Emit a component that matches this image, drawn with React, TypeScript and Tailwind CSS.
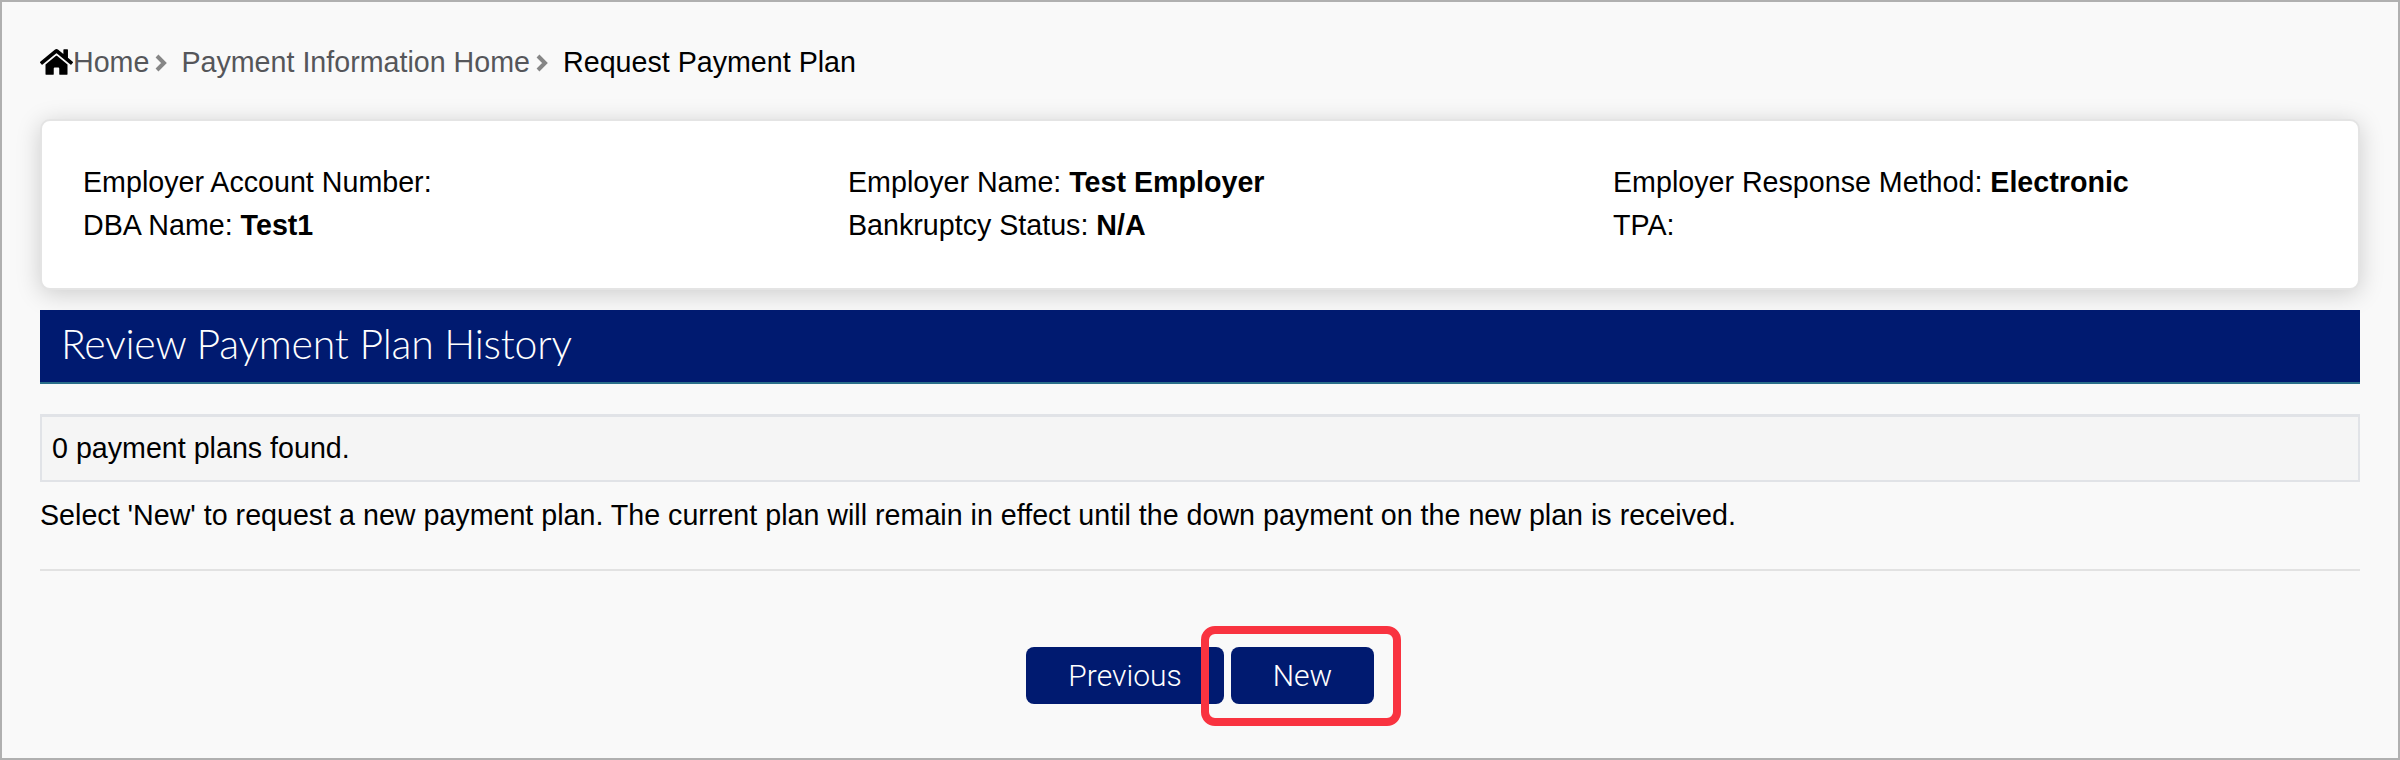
import { FaHome } from "react-icons/fa";

const infoRows = [
  [
    { label: "Employer Account Number:", value: "" },
    { label: "Employer Name:", value: "Test Employer" },
    { label: "Employer Response Method:", value: "Electronic" },
  ],
  [
    { label: "DBA Name:", value: "Test1" },
    { label: "Bankruptcy Status:", value: "N/A" },
    { label: "TPA:", value: "" },
  ],
];

const Chevron = () => (
  <svg viewBox="0 0 12 18" className="w-[12px] h-[18px] ml-[6px] mt-[2px]">
    <path d="M2 2l7 7-7 7" fill="none" stroke="#868686" strokeWidth="4" />
  </svg>
);

const App = () => {
  return (
    <div className="w-[2400px] h-[760px] border-2 border-[#b0b0b0] bg-[#f9f9f9] px-[38px] font-['Liberation_Sans',Arial,sans-serif] text-[28.65px] text-black flex flex-col">
      <nav className="mt-[40px] h-[40px] flex items-center">
        <FaHome className="w-[33px] h-[30px] text-black" />
        <span className="text-[#55565a]">Home</span>
        <Chevron />
        <span className="ml-[14px] text-[#55565a]">Payment Information Home</span>
        <Chevron />
        <span className="ml-[15px]">Request Payment Plan</span>
      </nav>

      <div className="mt-[37px] h-[171px] w-[2320px] rounded-[10px] border-2 border-[#e4e4e4] bg-white shadow-[0_4px_24px_rgba(0,0,0,0.18)] pl-[41px] pt-[40px]">
        {infoRows.map((row, index) => (
          <div key={index} className="grid grid-cols-[765px_765px_1fr] h-[43px] items-center">
            {row.map((item) => (
              <div key={item.label}>
                {item.label} {item.value && <b>{item.value}</b>}
              </div>
            ))}
          </div>
        ))}
      </div>

      <h2 className="mt-[20px] h-[74px] w-[2320px] bg-[#001a70] border-b-2 border-[#2a6f8a] pl-[21px] pb-[5px] flex items-center font-['Lato',sans-serif] font-light text-[41px] tracking-[-0.24px] text-white">
        Review Payment Plan History
      </h2>

      <div className="mt-[30px] h-[68px] w-[2320px] border-2 border-t-[3px] border-[#e1e3e7] bg-[#f5f5f5] pl-[10px] flex items-center">
        0 payment plans found.
      </div>
      <p className="mt-[12px] h-[43px] flex items-center">
        Select 'New' to request a new payment plan. The current plan will remain in effect until the down payment on the new plan is received.
      </p>
      <hr className="mt-[32px] w-[2320px] border-t-2 border-[#e2e2e2]" />

      <div className="mt-[76px] flex justify-center gap-[7px] font-['Roboto',sans-serif] font-light text-[30px] text-white">
        <button className="w-[198px] h-[57px] rounded-[8px] bg-[#001a70]">Previous</button>
        <div className="relative">
          <button className="w-[143px] h-[57px] rounded-[8px] bg-[#001a70]">New</button>
          <div className="absolute -left-[30px] -right-[27px] -top-[21px] -bottom-[22px] rounded-[14px] border-[8px] border-[#f93340]" />
        </div>
      </div>
    </div>
  );
};

export default App;
